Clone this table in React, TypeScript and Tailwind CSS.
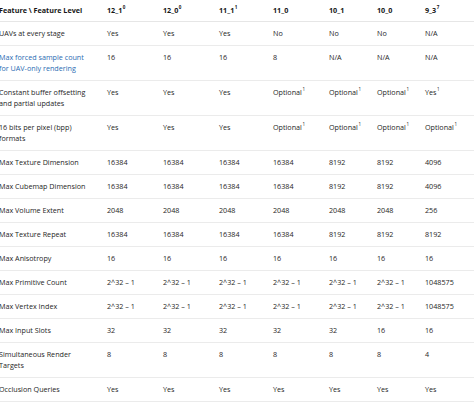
import React from 'react';

type Cell = React.ReactNode;

const Sup = ({ n }: { n: string }) => (
  <sup className="relative -top-[1px] ml-[0.5px] text-[4.5px] align-super leading-none">{n}</sup>
);

const opt = (
  <>
    Optional<Sup n="1" />
  </>
);

const rows: { label: Cell; link?: boolean; cells: Cell[] }[] = [
  { label: 'UAVs at every stage', cells: ['Yes', 'Yes', 'Yes', 'No', 'No', 'No', 'N/A'] },
  {
    label: (
      <>
        Max forced sample count
        <br />
        for UAV-only rendering
      </>
    ),
    link: true,
    cells: ['16', '16', '16', '8', 'N/A', 'N/A', 'N/A'],
  },
  {
    label: (
      <>
        Constant buffer offsetting
        <br />
        and partial updates
      </>
    ),
    cells: ['Yes', 'Yes', 'Yes', opt, opt, opt, <>Yes<Sup n="1" /></>],
  },
  {
    label: (
      <>
        16 bits per pixel (bpp)
        <br />
        formats
      </>
    ),
    cells: ['Yes', 'Yes', 'Yes', opt, opt, opt, opt],
  },
  { label: 'Max Texture Dimension', cells: ['16384', '16384', '16384', '16384', '8192', '8192', '4096'] },
  { label: 'Max Cubemap Dimension', cells: ['16384', '16384', '16384', '16384', '8192', '8192', '4096'] },
  { label: 'Max Volume Extent', cells: ['2048', '2048', '2048', '2048', '2048', '2048', '256'] },
  { label: 'Max Texture Repeat', cells: ['16384', '16384', '16384', '16384', '8192', '8192', '8192'] },
  { label: 'Max Anisotropy', cells: ['16', '16', '16', '16', '16', '16', '16'] },
  { label: 'Max Primitive Count', cells: ['2^32 – 1', '2^32 – 1', '2^32 – 1', '2^32 – 1', '2^32 – 1', '2^32 – 1', '1048575'] },
  { label: 'Max Vertex Index', cells: ['2^32 – 1', '2^32 – 1', '2^32 – 1', '2^32 – 1', '2^32 – 1', '2^32 – 1', '1048575'] },
  { label: 'Max Input Slots', cells: ['32', '32', '32', '32', '32', '16', '16'] },
  {
    label: (
      <>
        Simultaneous Render
        <br />
        Targets
      </>
    ),
    cells: ['8', '8', '8', '8', '8', '8', '4'],
  },
  { label: 'Occlusion Queries', cells: ['Yes', 'Yes', 'Yes', 'Yes', 'Yes', 'Yes', 'Yes'] },
];

const cols = 'grid grid-cols-[108px_56px_56px_54px_56px_48px_48px_48px]';

export default function App() {
  return (
    <div
      className="w-[474px] h-[406px] overflow-hidden bg-white text-[7.2px] leading-[11px] text-[#262626]"
      style={{ fontFamily: '"Open Sans", "Noto Sans", sans-serif' }}
    >
      <div className="-ml-[1px]">
        <div className={`${cols} pt-[5px] pb-[5px] border-b border-[#e6e6e6] font-bold text-[#161616]`}>
          <div>Feature \ Feature Level</div>
          <div>12_1<Sup n="0" /></div>
          <div>12_0<Sup n="0" /></div>
          <div>11_1<Sup n="1" /></div>
          <div>11_0</div>
          <div>10_1</div>
          <div>10_0</div>
          <div>9_3<Sup n="7" /></div>
        </div>
        {rows.map((r, i) => (
          <div key={i} className={`${cols} py-[6px] border-b border-[#ebebeb]`}>
            <div className={r.link ? 'text-[#2b6cb3]' : ''}>{r.label}</div>
            {r.cells.map((c, j) => (
              <div key={j}>{c}</div>
            ))}
          </div>
        ))}
      </div>
    </div>
  );
}
